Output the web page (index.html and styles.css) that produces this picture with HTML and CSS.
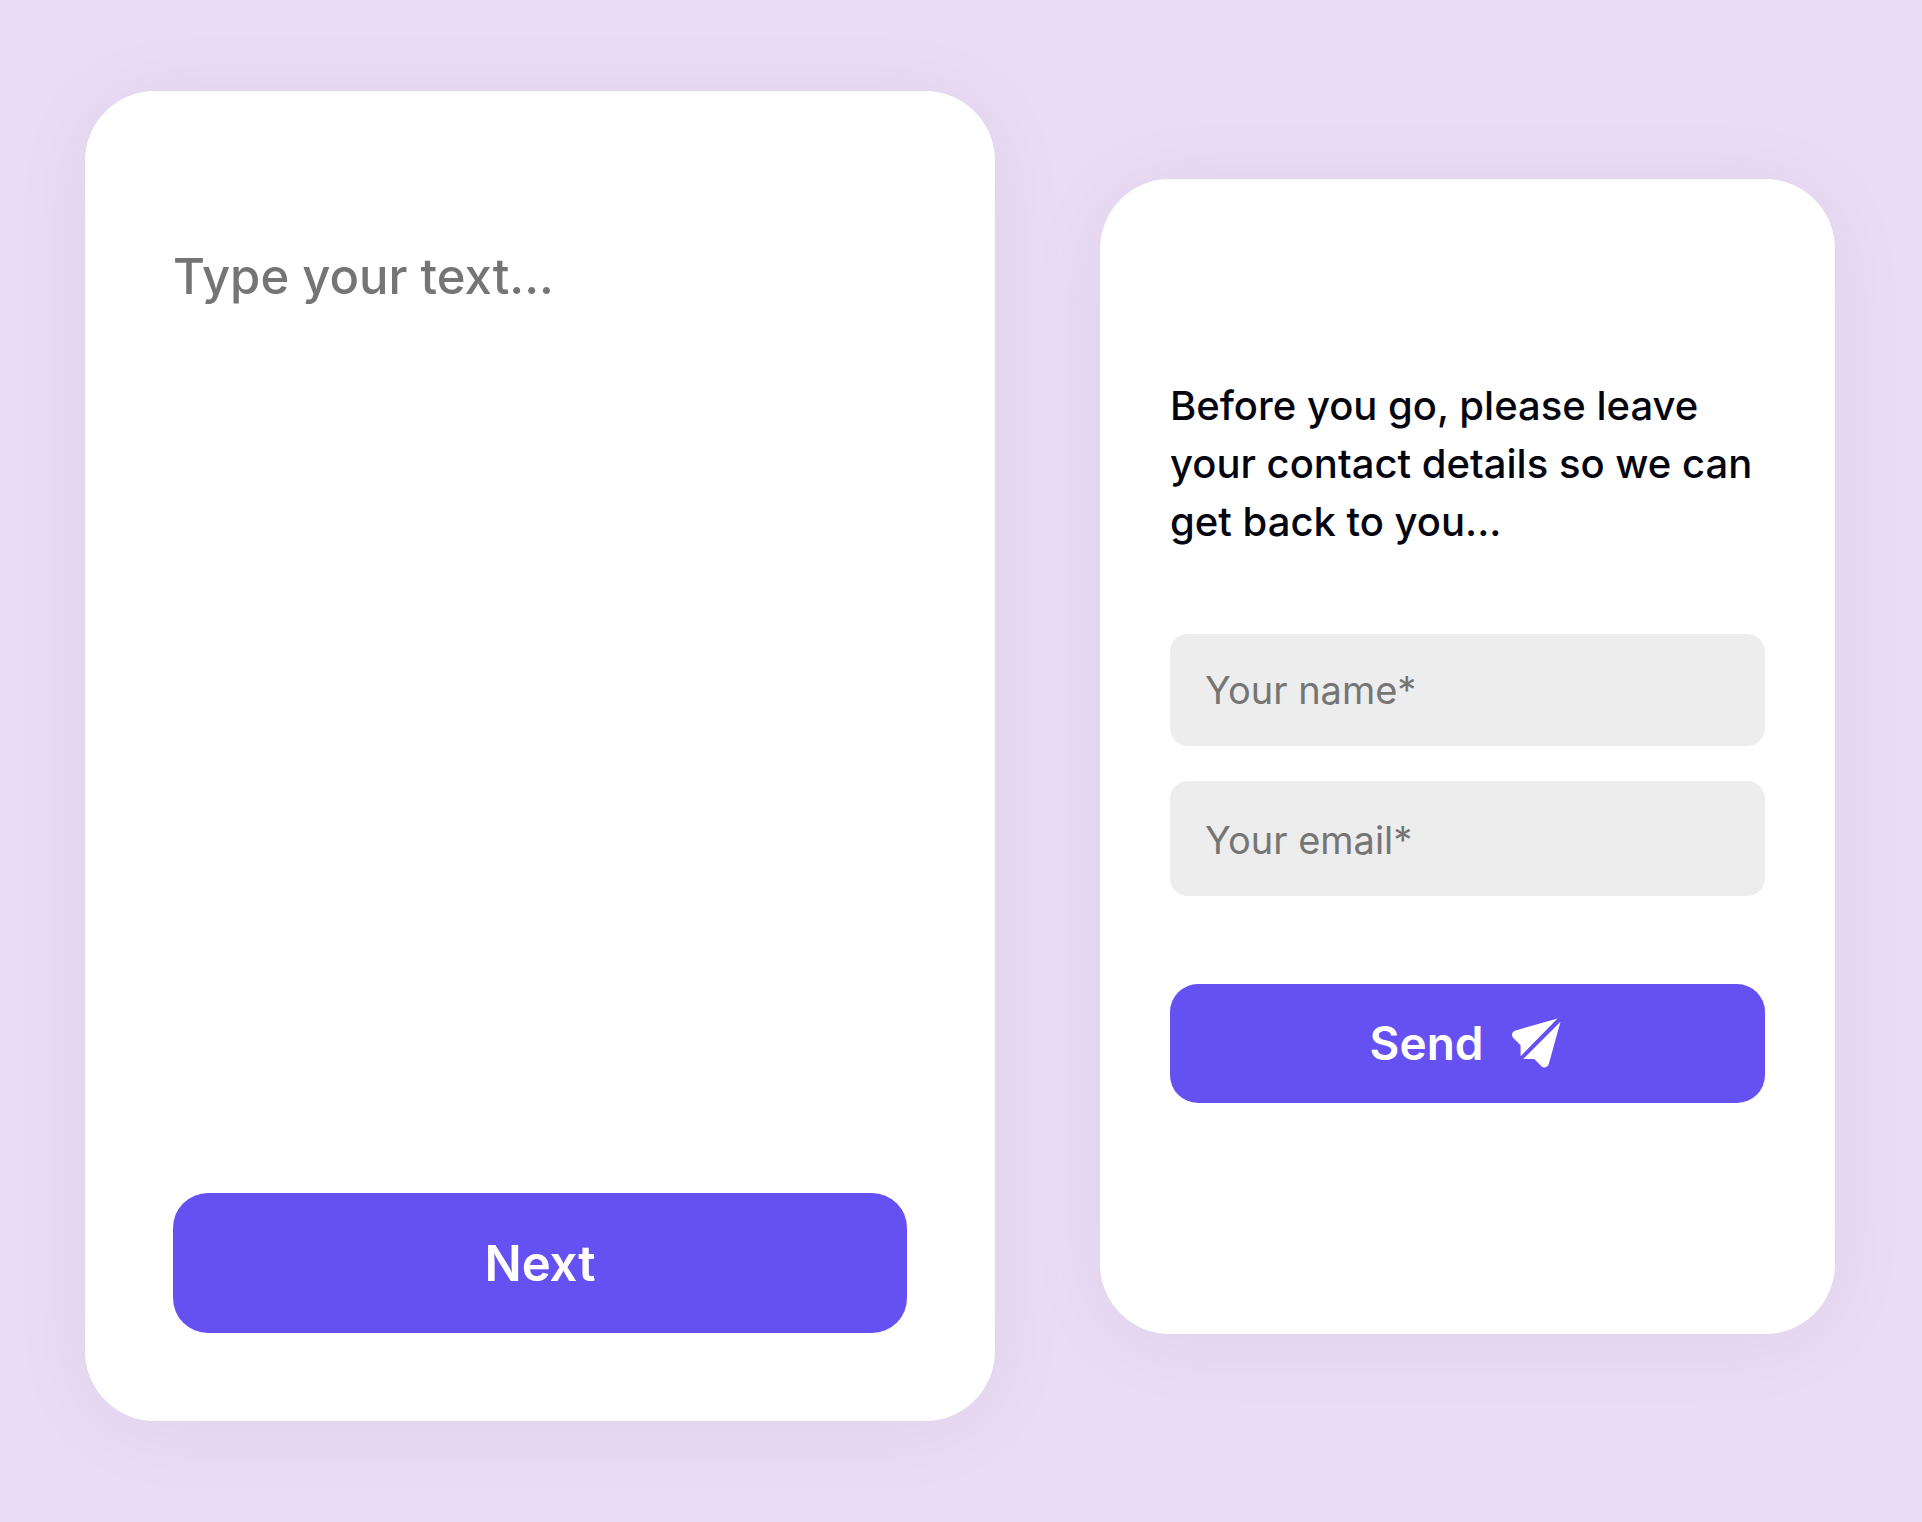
FILE: index.html
```html
<!DOCTYPE html>
<html lang="en">
<head>
<meta charset="utf-8">
<meta name="viewport" content="width=device-width, initial-scale=1">
<title>Feedback</title>
<link rel="stylesheet" href="styles.css">
</head>
<body>
<main class="page">
  <form class="card card-message">
    <textarea class="message" aria-label="Your message" placeholder="Type your text..."></textarea>
    <button class="button button-next" type="button">Next</button>
  </form>
  <form class="card card-contact">
    <p class="intro">Before you go, please leave your contact details so we can get back to you...</p>
    <div class="fields">
      <input class="field" type="text" aria-label="Your name" placeholder="Your name*">
      <input class="field field-email" type="email" aria-label="Your email" placeholder="Your email*">
    </div>
    <button class="button button-send" type="button">
      <span>Send</span>
      <svg class="icon" viewBox="0 0 50 50" fill="currentColor" aria-hidden="true">
        <path d="M46.5 0.5 L4.5 12.5 C0.8 13.7 0 17.5 2.3 20 L9.6 27.3 V38.2 Z"/>
        <path d="M49.5 3.8 L12.3 41 H23.2 L30.2 48 C32.4 50.5 36.7 49.8 37.8 46 Z"/>
      </svg>
    </button>
  </form>
</main>
</body>
</html>
```
FILE: styles.css
```css
* {
  box-sizing: border-box;
}

body {
  margin: 0;
  background: #eadcf5;
  color: #05050f;
  font-family: Inter, "Liberation Sans", sans-serif;
}

.page {
  display: grid;
  grid-template-columns: 26fr 21fr;
  align-items: center;
  gap: 105px;
  min-height: 100vh;
  padding: 91px 87px 101px 85px;
}

.card {
  display: flex;
  flex-direction: column;
  min-width: 0;
  border-radius: 70px;
  background: #fff;
  box-shadow: 0 7px 88px rgba(40, 15, 40, 0.05);
}

.card-message {
  min-height: 1330px;
  padding: 88px;
}

.card-contact {
  min-height: 1155px;
  padding: 198px 70px 70px;
}

.message {
  flex: 1;
  width: 100%;
  padding: 68px 0 0;
  border: 0;
  outline: 0;
  resize: none;
  background: transparent;
  font: 500 49px/60px Inter, "Liberation Sans", sans-serif;
}

.message::placeholder,
.field::placeholder {
  color: #757575;
  opacity: 1;
}

.intro {
  margin: 0 0 83px;
  font-size: 40px;
  font-weight: 500;
  line-height: 58px;
}

.fields {
  display: flex;
  flex-direction: column;
  gap: 35px;
  margin-bottom: 88px;
}

.field {
  width: 100%;
  height: 112px;
  padding: 0 35px;
  border: 0;
  border-radius: 18px;
  background: #ededed;
  font: 400 38px/48px Inter, "Liberation Sans", sans-serif;
}

.field-email {
  height: 115px;
  padding-top: 3px;
}

.button {
  display: flex;
  align-items: center;
  justify-content: center;
  width: 100%;
  border: 0;
  background: #6551f1;
  color: #fff;
  font-family: inherit;
  font-weight: 600;
}

.button-next {
  height: 140px;
  border-radius: 35px;
  font-size: 49px;
}

.button-send {
  gap: 28px;
  height: 119px;
  padding: 0 10px 0 6px;
  border-radius: 28px;
  font-size: 46px;
}

.icon {
  width: 50px;
  height: 50px;
}
```
